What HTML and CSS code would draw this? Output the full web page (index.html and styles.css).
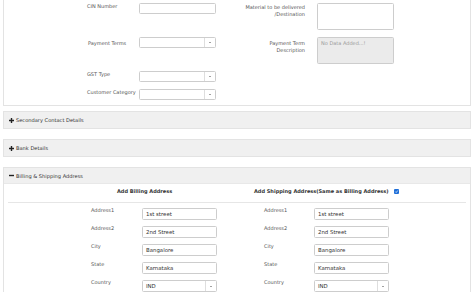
FILE: index.html
```html
<!DOCTYPE html>
<html>
<head>
<meta charset="utf-8">
<link rel="stylesheet" href="styles.css">
</head>
<body>
<div class="page">
  <section class="panel panel-top">
    <div class="form-grid">
      <div class="lbl">CIN Number</div>
      <div class="ctl input"></div>
      <div class="rlbl">Material to be delivered<br>/Destination</div>
      <div class="ctl textarea"></div>

      <div class="lbl lbl-low">Payment Terms</div>
      <div class="ctl select"><span class="sel-val"></span><span class="sel-btn"><i class="caret"></i></span></div>
      <div class="rlbl rlbl-low">Payment Term<br>Description</div>
      <div class="ctl textarea disabled">No Data Added...!</div>

      <div class="lbl">GST Type</div>
      <div class="ctl select"><span class="sel-val"></span><span class="sel-btn"><i class="caret"></i></span></div>
      <div></div>
      <div></div>

      <div class="lbl">Customer Category</div>
      <div class="ctl select"><span class="sel-val"></span><span class="sel-btn"><i class="caret"></i></span></div>
    </div>
  </section>

  <section class="panel">
    <div class="panel-heading">
      <svg class="ico" width="5" height="5" viewBox="0 0 5 5"><path d="M1.8 0h1.4v1.8H5v1.4H3.2V5H1.8V3.2H0V1.8h1.8z" fill="#222"/></svg>
      <span>Secondary Contact Details</span>
    </div>
  </section>

  <section class="panel">
    <div class="panel-heading">
      <svg class="ico" width="5" height="5" viewBox="0 0 5 5"><path d="M1.8 0h1.4v1.8H5v1.4H3.2V5H1.8V3.2H0V1.8h1.8z" fill="#222"/></svg>
      <span>Bank Details</span>
    </div>
  </section>

  <section class="panel panel-open">
    <div class="panel-heading">
      <svg class="ico" width="5" height="5" viewBox="0 0 5 5"><rect x="0" y="1.8" width="5" height="1.4" fill="#222"/></svg>
      <span>Billing &amp; Shipping Address</span>
    </div>
    <div class="panel-body">
      <div class="addr-head">
        <div class="addr-title addr-title-left">Add Billing Address</div>
        <div class="addr-title addr-title-right">
          <span>Add Shipping Address(Same as Billing Address)</span>
          <svg class="chk" width="5" height="5" viewBox="0 0 5 5"><rect x="0" y="0" width="5" height="5" rx="1" fill="#1f6fd8"/><path d="M1.3 2.6l0.9 0.9 1.6-2" stroke="#fff" stroke-width="0.7" fill="none"/></svg>
        </div>
      </div>
      <div class="addr-body">
        <div class="addr-col addr-col-left">
          <div class="addr-row"><div class="albl">Address1</div><div class="ctl input addr-in">1st street</div></div>
          <div class="addr-row"><div class="albl">Address2</div><div class="ctl input addr-in">2nd Street</div></div>
          <div class="addr-row"><div class="albl">City</div><div class="ctl input addr-in">Bangalore</div></div>
          <div class="addr-row"><div class="albl">State</div><div class="ctl input addr-in">Karnataka</div></div>
          <div class="addr-row"><div class="albl">Country</div><div class="ctl select addr-in"><span class="sel-val">IND</span><span class="sel-btn"><i class="caret"></i></span></div></div>
        </div>
        <div class="addr-col addr-col-right">
          <div class="addr-row"><div class="albl">Address1</div><div class="ctl input addr-in">1st street</div></div>
          <div class="addr-row"><div class="albl">Address2</div><div class="ctl input addr-in">2nd Street</div></div>
          <div class="addr-row"><div class="albl">City</div><div class="ctl input addr-in">Bangalore</div></div>
          <div class="addr-row"><div class="albl">State</div><div class="ctl input addr-in">Karnataka</div></div>
          <div class="addr-row"><div class="albl">Country</div><div class="ctl select addr-in"><span class="sel-val">IND</span><span class="sel-btn"><i class="caret"></i></span></div></div>
        </div>
      </div>
    </div>
  </section>
</div>
</body>
</html>
```

FILE: styles.css
```css
* { box-sizing: border-box; }
html, body { margin: 0; padding: 0; background: #fff; }
body {
  font-family: "DejaVu Sans", Verdana, sans-serif;
  font-size: 5px;
  color: #555;
  width: 474px;
  height: 295px;
  overflow: hidden;
}
.page { padding: 0 3px; }

.panel {
  border: 1px solid #e3e3e3;
  background: #fff;
  margin-bottom: 10px;
}
.panel-top { border-top: 0; margin-bottom: 5px; }
.panel-open { margin-bottom: 0; border-bottom: 0; }

/* top form */
.form-grid {
  display: grid;
  grid-template-columns: 52px 77px 101px 77px;
  grid-template-rows: 27px 27px 11px 11px;
  row-gap: 7px;
  padding: 3px 0 5px 83px;
}
.lbl { line-height: 6px; margin-top: -0.5px; color: #555; white-space: nowrap; }
.lbl-low { margin-top: 3px; padding-left: 1px; }
.rlbl {
  text-align: right;
  padding-right: 12px;
  line-height: 6.5px;
  padding-top: 1px;
  color: #555;
  white-space: nowrap;
}
.rlbl-low { padding-top: 3px; }

.ctl {
  border: 1px solid #cdcdcd;
  border-radius: 1.5px;
  background: #fff;
}
.input { height: 11px; }
.textarea { height: 27px; }
.disabled {
  background: #ebebeb;
  color: #9a9a9a;
  padding: 2px 3px;
  line-height: 6px;
}
.select { height: 11px; display: flex; }
.sel-val { flex: 1; padding-left: 3px; }
.sel-btn {
  width: 11px;
  border-left: 1px solid #dedede;
  display: flex;
  align-items: center;
  justify-content: center;
}
.caret {
  width: 0; height: 0;
  border-left: 1.3px solid transparent;
  border-right: 1.3px solid transparent;
  border-top: 1.8px solid #444;
}

/* panel headings */
.panel-heading {
  height: 16px;
  background: #f0f0f0;
  display: flex;
  align-items: center;
  padding-left: 5px;
  color: #333;
  font-size: 5.1px;
}
.panel-heading .ico { margin-right: 2px; flex: none; }
.panel-open .panel-heading { border-bottom: 1px solid #e8e8e8; }

/* billing body */
.panel-body { padding: 0 4px; }
.addr-head {
  display: flex;
  border-bottom: 1px solid #e6e6e6;
  padding: 4px 0 8px;
  line-height: 6px;
  font-weight: bold;
  color: #333;
}
.addr-title { width: 229px; display: flex; align-items: center; white-space: nowrap; }
.addr-title-left { padding-left: 109px; }
.addr-title-right { padding-left: 17px; }
.chk { margin-left: 5px; flex: none; }

.addr-body { display: flex; padding-top: 5px; }
.addr-col { width: 229px; display: flex; flex-direction: column; gap: 6px; }
.addr-col-left { padding-left: 83px; }
.addr-col-right { padding-left: 27px; }
.addr-col-left .albl { width: 51px; }
.addr-col-right .albl { width: 50px; }
.addr-row { display: flex; height: 12px; }
.albl { line-height: 6px; margin-top: -1px; color: #555; }
.addr-in {
  width: 75px;
  height: 12px;
  font-size: 5.4px;
  line-height: 10px;
  color: #333;
  padding: 0 3px;
}
.addr-in.select { padding: 0; }
.addr-in .sel-val { padding-left: 3px; }
```
